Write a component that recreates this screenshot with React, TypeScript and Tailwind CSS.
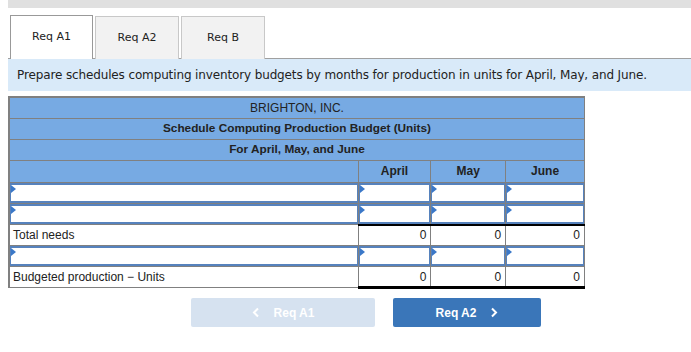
import React from "react";

const Tri = () => (
  <span className="absolute left-0 top-0 w-0 h-0 border-t-[4px] border-b-[4px] border-l-[5px] border-t-transparent border-b-transparent border-l-[#3b78c8]" />
);

const InputCell = () => (
  <td className="p-0 border border-[#808080] h-[20px]">
    <div className="relative h-[20px] border-y-2 border-x border-[#5682bd] bg-white">
      <Tri />
    </div>
  </td>
);

export default function App() {
  const tabBase =
    "h-[43px] flex items-center justify-center text-[11px] text-[#222]";
  return (
    <div className="w-[691px] h-[352px] bg-white relative overflow-hidden" style={{ fontFamily: "'DejaVu Sans', Verdana, sans-serif" }}>
      <div className="ml-[8px] h-[8px] bg-[#e0e0e0]" />
      <div className="flex items-end pl-[10px] pt-[7px] gap-[2px]">
        <div className={`${tabBase} w-[83px] bg-white border border-b-0 border-[#999] relative z-10 h-[44px]`}>Req A1</div>
        <div className={`${tabBase} w-[84px] bg-[#f2f2f2] border border-b-0 border-[#c8c8c8]`}>Req A2</div>
        <div className={`${tabBase} w-[84px] bg-[#f2f2f2] border border-b-0 border-[#c8c8c8]`}>Req B</div>
      </div>
      <div className="ml-[8px] h-[33px] bg-[#d9eaf9] border-t border-[#a0a0a0] -mt-px flex items-center pl-[9px] text-[12px] text-[#222] tracking-[-0.13px]">
        Prepare schedules computing inventory budgets by months for production in units for April, May, and June.
      </div>
      <div className="ml-[8px] mt-[5px]" style={{ fontFamily: "'Liberation Sans', Arial, sans-serif" }}>
        <table className="border-collapse text-[12px] text-[#222] border-l-2 border-[#808080]" style={{ width: 577 }}>
          <colgroup>
            <col style={{ width: 350 }} />
            <col style={{ width: 73 }} />
            <col style={{ width: 75 }} />
            <col style={{ width: 79 }} />
          </colgroup>
          <tbody>
            <tr className="bg-[#77aae3] h-[21px]">
              <td colSpan={4} className="border border-[#808080] border-t-2 text-center p-0">BRIGHTON, INC.</td>
            </tr>
            <tr className="bg-[#77aae3] h-[21px]">
              <td colSpan={4} className="border border-[#808080] text-center font-bold p-0 text-[11.8px]">Schedule Computing Production Budget (Units)</td>
            </tr>
            <tr className="bg-[#77aae3] h-[21px]">
              <td colSpan={4} className="border border-[#808080] text-center font-bold p-0 text-[11.8px]">For April, May, and June</td>
            </tr>
            <tr className="bg-[#77aae3] h-[22px] font-bold">
              <td className="border border-[#808080] p-0" />
              <td className="border border-[#808080] text-center p-0">April</td>
              <td className="border border-[#808080] text-center p-0">May</td>
              <td className="border border-[#808080] text-center p-0">June</td>
            </tr>
            <tr>
              <InputCell />
              <InputCell />
              <InputCell />
              <InputCell />
            </tr>
            <tr>
              <InputCell />
              <InputCell />
              <InputCell />
              <InputCell />
            </tr>
            <tr className="h-[21px]">
              <td className="border border-[#808080] px-[3px] py-0">Total needs</td>
              <td className="border border-[#808080] border-t-2 border-t-black text-right px-[4px] py-0">0</td>
              <td className="border border-[#808080] border-t-2 border-t-black text-right px-[4px] py-0">0</td>
              <td className="border border-[#808080] border-t-2 border-t-black text-right px-[4px] py-0">0</td>
            </tr>
            <tr>
              <InputCell />
              <InputCell />
              <InputCell />
              <InputCell />
            </tr>
            <tr className="h-[21px]">
              <td className="border border-[#808080] px-[3px] py-0">Budgeted production − Units</td>
              <td className="border border-[#808080] border-t-black border-b-[3px] border-b-black text-right px-[4px] py-0">0</td>
              <td className="border border-[#808080] border-t-black border-b-[3px] border-b-black text-right px-[4px] py-0">0</td>
              <td className="border border-[#808080] border-t-black border-b-[3px] border-b-black text-right px-[4px] py-0">0</td>
            </tr>
          </tbody>
        </table>
      </div>
      <div className="flex mt-[9px] ml-[191px] gap-[18px]" style={{ fontFamily: "'Liberation Sans', Arial, sans-serif" }}>
        <div className="w-[184px] h-[29px] rounded-[2px] bg-[#d6e2f0] flex items-center justify-center gap-[14px] text-white font-bold text-[12px]">
          <svg width="8" height="11" viewBox="0 0 8 11"><path d="M6 1.5 L2 5.5 L6 9.5" stroke="white" strokeWidth="2" fill="none" /></svg>
          <span>Req A1</span>
        </div>
        <div className="w-[148px] h-[29px] rounded-[2px] bg-[#3a76b9] flex items-center justify-center gap-[14px] text-white font-bold text-[12px]">
          <span>Req A2</span>
          <svg width="8" height="11" viewBox="0 0 8 11"><path d="M2 1.5 L6 5.5 L2 9.5" stroke="white" strokeWidth="2" fill="none" /></svg>
        </div>
      </div>
    </div>
  );
}
